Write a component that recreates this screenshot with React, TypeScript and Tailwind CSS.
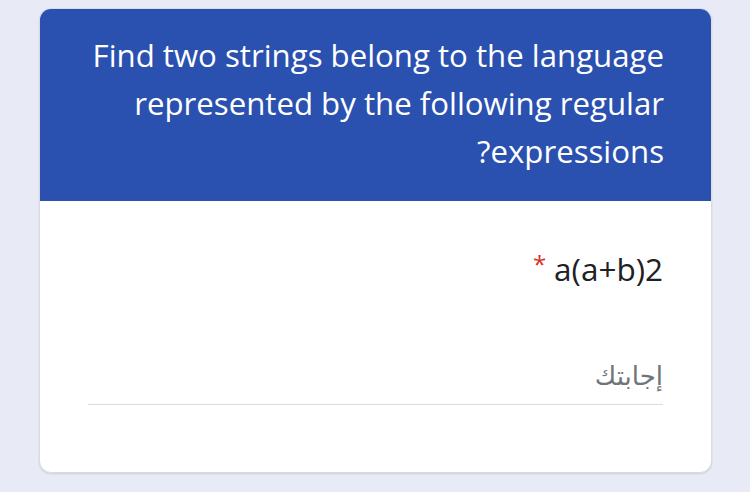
export default function App() {
  return (
    <div className="min-h-[492px] w-[750px] bg-[#e8eaf5] pt-[8px] pl-[39px]" style={{ fontFamily: "'Open Sans', 'Noto Sans', sans-serif" }}>
      <div dir="rtl" className="w-[673px] overflow-hidden rounded-[12px] border border-[#dadce0] bg-white shadow-[0_1px_2px_rgba(0,0,0,0.12)]">
        <div className="h-[192px] bg-[#2a50b0] px-[47px] pt-[22px] text-[31.2px] leading-[48px] text-white">
          Find two strings belong to the language represented by the following regular expressions?
        </div>
        <div className="h-[271px] px-[48px] pt-[47px]">
          <div className="flex items-start gap-[8px] text-[31.5px] leading-[42px] text-[#202124]">
            <span>a(a+b)2</span>
            <span className="pt-[2px] text-[24px] leading-[28px] text-[#d93025]">*</span>
          </div>
          <div className="mt-[68px] border-b border-[#dadce0] pb-[10px] text-[26px] leading-[36px] text-[#70757a]" style={{ fontFamily: "'DejaVu Sans', 'Noto Sans', sans-serif" }}>
            إجابتك
          </div>
        </div>
      </div>
    </div>
  );
}
